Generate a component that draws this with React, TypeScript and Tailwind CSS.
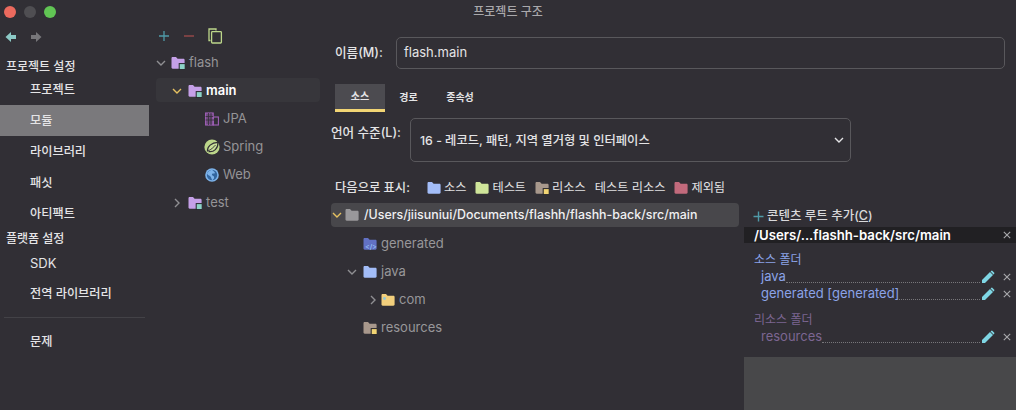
import React from "react";

const font = { fontFamily: 'Inter, "Noto Sans CJK KR", sans-serif' };

function Folder({ color, badge, children, size = 14 }: { color: string; badge?: string; children?: React.ReactNode; size?: number }) {
  return (
    <svg width={size} height={size} viewBox="0 0 14 14" className="shrink-0">
      <path d="M0.5 2.2C0.5 1.5 1 1 1.7 1H5L6.6 2.8H12.4C13.1 2.8 13.6 3.3 13.6 4V11.6C13.6 12.3 13.1 12.8 12.4 12.8H1.7C1 12.8 0.5 12.3 0.5 11.6Z" fill={color} />
      {badge && <rect x="8.2" y="7.6" width="6" height="6" fill={badge} stroke="#26252a" strokeWidth="1" />}
      {children}
    </svg>
  );
}

function Chevron({ open, color = "#8f8f92" }: { open: boolean; color?: string }) {
  return (
    <svg width="10" height="10" viewBox="0 0 10 10" className="shrink-0" fill="none" stroke={color} strokeWidth="1.4">
      {open ? <path d="M1 3L5 7L9 3" /> : <path d="M3 1L7 5L3 9" />}
    </svg>
  );
}

function SideItem({ label, active, latin }: { label: string; active?: boolean; latin?: boolean }) {
  return (
    <div className={`h-[31px] pt-[2px] flex items-center pl-[30px] text-[#e4e4e6] ${latin ? "text-[13px]" : "text-[12.2px] font-medium"} ${active ? "bg-[#7a797c]" : ""}`}>{label}</div>
  );
}

function Pencil() {
  return (
    <svg width="14" height="14" viewBox="0 0 14 14" className="shrink-0">
      <path d="M1 13V10L9 2L12 5L4 13Z" fill="#7fd6e4" />
      <path d="M10 1L11 0.5L13.5 3L13 4L12.5 4.5L9.6 1.5Z" fill="#7fd6e4" />
    </svg>
  );
}

function X() {
  return (
    <svg width="8" height="8" viewBox="0 0 8 8" className="shrink-0" stroke="#a9a9ac" strokeWidth="1.1">
      <path d="M0.8 0.8L7.2 7.2M7.2 0.8L0.8 7.2" />
    </svg>
  );
}

function PathRow({ label, color }: { label: string; color: string }) {
  return (
    <div className="h-[17px] flex items-center pl-[17px] pr-[5px]">
      <span className="text-[13px] leading-[17px]" style={{ color }}>{label}</span>
      <div className="flex-1 h-[13px] border-b border-dotted border-[#77767a]" />
      <div className="ml-[1px] mr-[8px]"><Pencil /></div>
      <X />
    </div>
  );
}

function Legend({ icon, label }: { icon?: React.ReactNode; label: string }) {
  return (
    <div className="flex items-center gap-[3px]">
      {icon}
      <span className="text-[12.2px] text-[#e2e2e4]">{label}</span>
    </div>
  );
}

function FileRow({ pad, chev, icon, label }: { pad: number; chev?: React.ReactNode; icon: React.ReactNode; label: string }) {
  return (
    <div className="h-[28px] pt-[2px] flex items-center">
      <div style={{ width: pad }} className="shrink-0 flex justify-end pr-[6px]">{chev}</div>
      <div className="mr-[4px] flex items-center shrink-0">{icon}</div>
      <span className="text-[13px] text-[#98979a]">{label}</span>
    </div>
  );
}

export default function App() {
  return (
    <div style={font} className="w-[1016px] h-[410px] bg-[#312f35] flex flex-col overflow-hidden">
      <div className="h-[24px] grid grid-cols-[1fr_auto_1fr] items-center shrink-0">
        <div className="flex gap-[8px] pl-[4px]">
          <div className="w-[12px] h-[12px] rounded-full bg-[#ec6a5e]" />
          <div className="w-[12px] h-[12px] rounded-full bg-[#4f4e52]" />
          <div className="w-[12px] h-[12px] rounded-full bg-[#61c554]" />
        </div>
        <div className="text-[12px] font-medium text-[#a9a8ab]">프로젝트 구조</div>
        <div />
      </div>
      <div className="flex flex-1 min-h-0">
        <div className="w-[149px] shrink-0 flex flex-col">
          <div className="h-[26px] flex items-center gap-[13px] pl-[5px]">
            <svg width="12" height="12" viewBox="0 0 12 12"><path d="M0.5 6L6 1V4H11V8H6V11Z" fill="#8cc9c6" /></svg>
            <svg width="12" height="12" viewBox="0 0 12 12"><path d="M11.5 6L6 1V4H1V8H6V11Z" fill="#77767a" /></svg>
          </div>
          <div className="h-[9px]" />
          <div className="h-[14px] pt-[2px] flex items-center pl-[6px] text-[12px] font-medium text-[#e4e4e6] mb-[1px]">프로젝트 설정</div>
          <SideItem label="프로젝트" />
          <SideItem label="모듈" active />
          <SideItem label="라이브러리" />
          <SideItem label="패싯" />
          <SideItem label="아티팩트" />
          <div className="h-[18px] pt-[2px] flex items-center pl-[6px] text-[12px] font-medium text-[#e4e4e6]">플랫폼 설정</div>
          <SideItem label="SDK" latin />
          <SideItem label="전역 라이브러리" />
          <div className="h-px bg-[#434247] mx-[4px] mt-[8px] mb-[8px]" />
          <SideItem label="문제" />
        </div>

        <div className="w-[171px] shrink-0 flex flex-col pl-[7px]">
          <div className="h-[24px] flex items-center gap-[13px] pl-[2px]">
            <svg width="12" height="12" viewBox="0 0 12 12" stroke="#4f9aa8" strokeWidth="1.3"><path d="M6 1V11M1 6H11" /></svg>
            <svg width="12" height="12" viewBox="0 0 12 12" stroke="#a24c4c" strokeWidth="1.3"><path d="M1 6H11" /></svg>
            <svg width="15" height="16" viewBox="0 0 15 16" fill="none" stroke="#bcd68a" strokeWidth="1.3">
              <path d="M2.5 12.5H1V1H8V2.5" />
              <rect x="3.6" y="3.6" width="9.8" height="11.4" rx="0.8" />
            </svg>
          </div>
          <div className="h-[28px] pt-[2px] flex items-center">
            <div className="w-[15px] flex justify-start"><Chevron open /></div>
            <div className="mr-[4px]"><Folder color="#c5a0e8" badge="#8dd3c7" /></div>
            <span className="text-[13px] text-[#959497]">flash</span>
          </div>
          <div className="h-[24px] my-[2px] pt-[2px] flex items-center bg-[#37363b] rounded-[4px]">
            <div className="w-[16px] shrink-0" />
            <div className="w-[16px] flex"><Chevron open color="#e5c160" /></div>
            <div className="mr-[4px]"><Folder color="#c5a0e8" badge="#8dd3c7" /></div>
            <span className="text-[13px] text-white font-semibold">main</span>
          </div>
          <div className="h-[28px] pt-[2px] flex items-center pl-[49px]">
            <svg width="14" height="14" viewBox="0 0 14 14" className="mr-[4px] shrink-0" fill="none" stroke="#a060b8" strokeWidth="1.1">
              <rect x="0.6" y="1" width="7.6" height="12" fill="#a060b8" fillOpacity="0.55" />
              <rect x="8.2" y="5" width="5.2" height="8" />
              <path d="M0.6 4.5H8.2M0.6 8H13M3.5 1V13M6 1V13" stroke="#312f35" strokeWidth="0.8" />
            </svg>
            <span className="text-[13px] text-[#959497]">JPA</span>
          </div>
          <div className="h-[28px] pt-[2px] flex items-center pl-[48px]">
            <svg width="16" height="16" viewBox="0 0 16 16" className="mr-[3px] shrink-0">
              <circle cx="8" cy="8" r="7.6" fill="#bcd68a" />
              <path d="M13 0L16 3.4L13.4 3.6Z" fill="#312f35" />
              <path d="M3.5 12.5C3 7.5 7.5 3.6 14 3.4C14 9.5 10 13.4 4.6 12.6" fill="#c9e09a" stroke="#312f35" strokeWidth="1.2" />
              <path d="M4 12C7 10.5 9.5 8.5 11.5 6" fill="none" stroke="#312f35" strokeWidth="0.9" />
            </svg>
            <span className="text-[13px] text-[#959497]">Spring</span>
          </div>
          <div className="h-[28px] pt-[2px] flex items-center pl-[49px]">
            <svg width="14" height="14" viewBox="0 0 14 14" className="mr-[4px] shrink-0">
              <circle cx="7" cy="7" r="6.8" fill="#7db3ea" />
              <circle cx="7" cy="7" r="5.2" fill="#33669f" />
              <path d="M7 1.8C8 3 9.5 3.5 10 5C9 6 8 5 7 6C6.5 7 8 8 9 8.5C9.5 10 8.5 11.5 7.5 12.2C6 11 6.5 9 5 8C3.5 7.5 2.5 6.5 2 5.5C3 3.5 5 2 7 1.8Z" fill="#7db3ea" />
            </svg>
            <span className="text-[13px] text-[#959497]">Web</span>
          </div>
          <div className="h-[28px] pt-[2px] flex items-center">
            <div className="w-[16px] shrink-0" />
            <div className="w-[16px] flex"><Chevron open={false} /></div>
            <div className="mr-[4px]"><Folder color="#c5a0e8" badge="#8dd3c7" /></div>
            <span className="text-[13px] text-[#959497]">test</span>
          </div>
        </div>

        <div className="flex-1 min-w-0 flex flex-col">
          <div className="h-[32px] mt-[13px] flex items-center pr-[11px] pl-[15px]">
            <span className="text-[12.6px] font-medium text-[#e4e4e6] w-[61px] shrink-0">이름(M):</span>
            <div className="flex-1 h-[32px] border border-[#59585c] rounded-[5px] flex items-center pl-[7px] text-[13px] text-[#e4e4e6]">flash.main</div>
          </div>
          <div className="flex mt-[15px] ml-[15px] h-[28px] text-[10px] font-semibold text-[#e4e4e6]">
            <div className="w-[50px] flex items-center justify-center bg-[#4c4b50] border-b-[3px] border-[#f2d574]">소스</div>
            <div className="w-[47px] flex items-center justify-center pb-[1px]">경로</div>
            <div className="w-[56px] flex items-center justify-center pb-[1px]">종속성</div>
          </div>
          <div className="flex mt-[6px] pl-[11px]">
            <span className="text-[12.6px] font-medium text-[#e4e4e6] w-[79px] shrink-0 pt-[6px]">언어 수준(L):</span>
            <div className="w-[441px] h-[44px] border border-[#59585c] rounded-[5px] flex items-center justify-between pl-[9px] pr-[6px] text-[12.3px] font-medium text-[#e4e4e6]">
              <span className="pt-[2px]">16 - 레코드, 패턴, 지역 열거형 및 인터페이스</span>
              <Chevron open color="#e4e4e6" />
            </div>
          </div>
          <div className="flex items-center mt-[16px] pl-[15px] h-[18px] pt-[2px]">
            <span className="text-[12.3px] font-medium text-[#e2e2e4] w-[92px] shrink-0">다음으로 표시:</span>
            <div className="flex items-center gap-[9px]">
              <Legend icon={<Folder color="#a3bdf8" />} label="소스" />
              <Legend icon={<Folder color="#cfe59a" />} label="테스트" />
              <Legend icon={<Folder color="#a8988c" badge="#f2d574" />} label="리소스" />
              <Legend label="테스트 리소스" />
              <Legend icon={<Folder color="#c26a7c" />} label="제외됨" />
            </div>
          </div>
          <div className="flex flex-1 min-h-0 mt-[7px] pl-[11px]">
            <div className="w-[408px] shrink-0">
              <div className="h-[24px] bg-[#48474b] rounded-[4px] flex items-center">
                <div className="w-[14px] flex pl-[1px]"><Chevron open color="#e5c160" /></div>
                <div className="mr-[5px]"><Folder color="#99989b" /></div>
                <span className="text-[12.4px] font-medium text-[#f0f0f2] whitespace-nowrap">/Users/jiisuniui/Documents/flashh/flashh-back/src/main</span>
              </div>
              <div className="pt-[2px]">
                <FileRow pad={32} icon={
                  <Folder color="#6271c4">
                    <text x="8" y="12" fontSize="7" fill="#a3d3ff" fontFamily="Inter" textAnchor="middle">&lt;/&gt;</text>
                  </Folder>} label="generated" />
                <FileRow pad={32} chev={<Chevron open />} icon={<Folder color="#a3bdf8" />} label="java" />
                <div className="h-[28px] pt-[2px] flex items-center">
                  <div className="w-[50px] shrink-0 flex justify-end pr-[3px]"><Chevron open={false} /></div>
                  <div className="mr-[4px]">
                    <Folder color="#f2cf7c"><circle cx="3.5" cy="5.5" r="1.4" fill="#8fc8dc" /></Folder>
                  </div>
                  <span className="text-[13px] text-[#98979a]">com</span>
                </div>
                <FileRow pad={32} icon={<Folder color="#a8988c" badge="#f2d574" />} label="resources" />
              </div>
            </div>
            <div className="flex-1 ml-[5px] flex flex-col">
              <div className="h-[24px] pt-[2px] flex items-center gap-[3px] pl-[9px] text-[12.5px] font-medium text-[#d9d9db]">
                <svg width="11" height="11" viewBox="0 0 11 11" stroke="#4f9aa8" strokeWidth="1.4"><path d="M5.5 0.5V10.5M0.5 5.5H10.5" /></svg>
                <span>콘텐츠 루트 추가(<span className="underline">C</span>)</span>
              </div>
              <div className="h-[16px] bg-[#212023] flex items-center justify-between pl-[10px] pr-[5px]">
                <span className="text-[13.2px] font-semibold text-white pt-[2px]">/Users/...flashh-back/src/main</span>
                <X />
              </div>
              <div className="pt-[8px] pl-[10px] h-[25px] text-[12px] leading-[17px] text-[#8ba3e8]">소스 폴더</div>
              <PathRow label="java" color="#8ba3e8" />
              <PathRow label="generated [generated]" color="#8ba3e8" />
              <div className="pt-[9px] pl-[10px] h-[26px] text-[12px] leading-[17px] text-[#7c6692]">리소스 폴더</div>
              <PathRow label="resources" color="#7c6692" />
              <div className="flex-1 mt-[12px] bg-[#48484a]" />
            </div>
          </div>
        </div>
      </div>
    </div>
  );
}
